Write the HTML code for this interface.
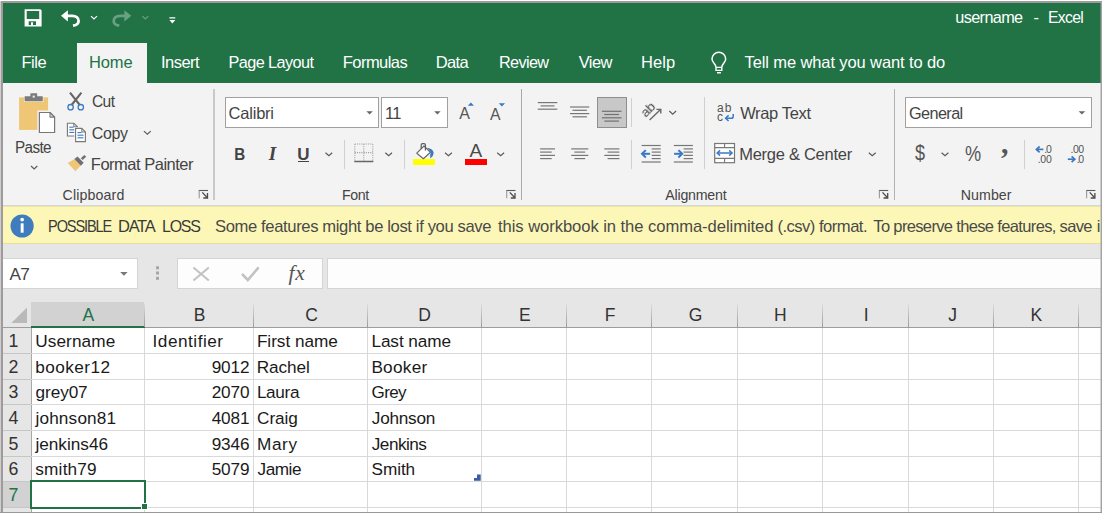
<!DOCTYPE html>
<html lang="en">
<head>
<meta charset="utf-8">
<title>username - Excel</title>
<style>
html,body{margin:0;padding:0}
body{width:1102px;height:513px;position:relative;overflow:hidden;background:#fff;
 font-family:"Liberation Sans",sans-serif;font-size:15.5px;color:#444}
#app{position:absolute;left:0;top:0;width:1102px;height:513px;overflow:hidden}
.t{position:absolute;white-space:nowrap;margin:0}
.blk,.edge,svg{position:absolute;display:block}
svg{overflow:visible}
.edge{z-index:5}
</style>
</head>
<body>
<div id="app">
<header id="titlebar">
<div class="blk" style="left:3px;top:3px;width:1098px;height:80px;background:#217346"></div>
<span class="t" style="left:955.3px;top:6.1px;font-size:16.25px;line-height:22px;color:#fff;letter-spacing:-0.63px">username</span>
<span class="t" style="left:1033.5px;top:6.1px;font-size:16.5px;line-height:22px;color:#fff">-</span>
<span class="t" style="left:1047.7px;top:7.1px;font-size:16px;line-height:21px;color:#fff;letter-spacing:-0.65px;transform:scaleX(0.981);transform-origin:1px 50%">Excel</span>
<svg aria-label="Save" style="left:23px;top:8px" width="20" height="20" viewBox="23 8 20 20"><path d="M24.6 9.2 H40.4 L41.6 10.4 V26.6 H24.6 Z" fill="#fff"/><rect x="26.7" y="11" width="12.5" height="8" fill="#217346"/><rect x="28.7" y="21.3" width="7.3" height="3.8" fill="#217346"/><rect x="31" y="22.3" width="2" height="3.4" fill="#fff"/></svg>
<svg aria-label="Undo" style="left:59px;top:8px" width="24" height="20" viewBox="59 8 24 20"><path d="M61 15.8 L67.9 10.2 V21.4 Z" fill="#fff"/><path d="M66 15.8 H72.2 C76.3 15.8 78.6 18.3 78.6 20.9 C78.6 23.4 76.6 25.1 73 25.7" fill="none" stroke="#fff" stroke-width="2.8"/></svg>
<svg style="left:90px;top:15px" width="9" height="6" viewBox="90 15 9 6"><path d="M91 16.1 L94 18.9 L97 16.1" fill="none" stroke="#fff" stroke-width="1.2"/></svg>
<svg aria-label="Redo" style="left:110px;top:8px" width="24" height="20" viewBox="110 8 24 20"><g opacity=".33"><path d="M131.3 15.8 L124.4 10.2 V21.4 Z" fill="#fff"/><path d="M126.3 15.8 H120.1 C116 15.8 113.7 18.3 113.7 20.9 C113.7 23.4 115.7 25.1 119.3 25.7" fill="none" stroke="#fff" stroke-width="2.8"/></g></svg>
<svg style="left:141px;top:15px" width="9" height="6" viewBox="141 15 9 6"><path d="M142.4 16.1 L145.35 18.9 L148.3 16.1" fill="none" stroke="#fff" stroke-width="1.2" opacity="0.33"/></svg>
<svg aria-label="Customize Quick Access Toolbar" style="left:168px;top:16px" width="9" height="9" viewBox="168 16 9 9"><path d="M169.4 17.2 H175.3 V18.5 H169.4 Z M169.4 20 H175.3 L172.35 23.6 Z" fill="#fff"/></svg>
</header>
<nav id="tabs">
<div class="blk" style="left:77px;top:43px;width:70px;height:40px;background:#f3f3f3"></div>
<span class="t" style="left:21.5px;top:51px;font-size:16.5px;line-height:22px;color:#fff;letter-spacing:-0.47px">File</span>
<span class="t" style="left:89px;top:51px;font-size:16.5px;line-height:22px;color:#217346;letter-spacing:-0.11px">Home</span>
<span class="t" style="left:161px;top:51px;font-size:16.5px;line-height:22px;color:#fff;letter-spacing:-0.54px">Insert</span>
<span class="t" style="left:228.5px;top:51px;font-size:16.25px;line-height:22px;color:#fff;letter-spacing:-0.57px">Page Layout</span>
<span class="t" style="left:342.75px;top:51px;font-size:16.5px;line-height:22px;color:#fff;letter-spacing:-0.54px">Formulas</span>
<span class="t" style="left:435.75px;top:51px;font-size:16.5px;line-height:22px;color:#fff;letter-spacing:-0.64px">Data</span>
<span class="t" style="left:499px;top:51px;font-size:16.25px;line-height:22px;color:#fff;letter-spacing:-0.65px">Review</span>
<span class="t" style="left:578.75px;top:51px;font-size:16.5px;line-height:22px;color:#fff;letter-spacing:-0.6px">View</span>
<span class="t" style="left:641px;top:51px;font-size:16.5px;line-height:22px;color:#fff;letter-spacing:0.08px">Help</span>
<span class="t" style="left:744.5px;top:51px;font-size:16.5px;line-height:22px;color:#fff;letter-spacing:-0.11px">Tell me what you want to do</span>
<svg aria-label="Tell me" style="left:709px;top:50px" width="20" height="25" viewBox="709 50 20 25"><path d="M716 67.2 C716 63.8 712 62.6 712 59.1 A6.85 6.85 0 0 1 725.7 59.1 C725.7 62.6 721.8 63.8 721.8 67.2" fill="none" stroke="#fff" stroke-width="1.5"/><path d="M716 67.4 H721.8 V70.4 H716 Z M717 72.8 H720.9" fill="none" stroke="#fff" stroke-width="1.4"/></svg>
</nav>
<section id="ribbon">
<div class="blk" style="left:3px;top:83px;width:1098px;height:122px;background:#f3f3f3"></div>
<div class="blk" style="left:3px;top:205px;width:1098px;height:1px;background:#d6d6d9"></div>
<div class="blk" style="left:213.3px;top:89px;width:1.5px;height:110.5px;background:#c9c9c9"></div>
<div class="blk" style="left:521px;top:89px;width:1px;height:110.5px;background:#aaaaaa"></div>
<div class="blk" style="left:894px;top:89px;width:1px;height:110.5px;background:#b2b2b2"></div>
<div class="blk" style="left:704px;top:96.5px;width:1px;height:72.5px;background:#cfcfcf"></div>
<div class="blk" style="left:344px;top:140px;width:1px;height:28.5px;background:#d0d0d0"></div>
<div class="blk" style="left:404px;top:140px;width:1px;height:28.5px;background:#d0d0d0"></div>
<div class="blk" style="left:631.3px;top:140px;width:1px;height:28.5px;background:#d0d0d0"></div>
<div class="blk" style="left:1024px;top:140px;width:1px;height:28.5px;background:#d0d0d0"></div>
<div class="blk" style="left:631.3px;top:98.3px;width:1px;height:28.5px;background:#d0d0d0"></div>
<div class="blk" style="left:225px;top:97px;width:154px;height:31px;background:#fff;border:1px solid #a0a0a0;box-sizing:border-box"></div>
<div class="blk" style="left:381px;top:97px;width:66.5px;height:31px;background:#fff;border:1px solid #a0a0a0;box-sizing:border-box"></div>
<div class="blk" style="left:905px;top:97px;width:186.5px;height:31px;background:#fff;border:1px solid #a0a0a0;box-sizing:border-box"></div>
<div class="blk" style="left:597px;top:97px;width:30px;height:31px;background:#c8c8c8;border:1px solid #8e8e8e;box-sizing:border-box"></div>
<div class="blk" style="left:298.2px;top:161px;width:10.9px;height:1.3px;background:#444"></div>
<div class="blk" style="left:413px;top:159.2px;width:21.9px;height:5.4px;background:#ffff00"></div>
<div class="blk" style="left:465.3px;top:159.2px;width:21.8px;height:5.4px;background:#ff0000"></div>
<span class="t" style="left:15.3px;top:136.7px;font-size:16px;line-height:21px;color:#444444;letter-spacing:-0.65px;transform:scaleX(0.954);transform-origin:1px 50%">Paste</span>
<span class="t" style="left:91.8px;top:91.4px;font-size:16px;line-height:21px;color:#444444;letter-spacing:-0.65px;transform:scaleX(0.973);transform-origin:-0px 50%">Cut</span>
<span class="t" style="left:91.8px;top:122.8px;font-size:16px;line-height:21px;color:#444444;letter-spacing:-0.38px">Copy</span>
<span class="t" style="left:90.8px;top:152.5px;font-size:16.5px;line-height:22px;color:#444444;letter-spacing:-0.49px">Format Painter</span>
<span class="t" style="left:62.6px;top:184.5px;font-size:14.2px;line-height:20px;color:#444444;letter-spacing:0.12px">Clipboard</span>
<span class="t" style="left:228.6px;top:101.5px;font-size:16.5px;line-height:22px;color:#444444;letter-spacing:-0.22px">Calibri</span>
<span class="t" style="left:384.6px;top:101.5px;font-size:16.5px;line-height:22px;color:#444444;letter-spacing:-0.65px;transform:scaleX(0.993);transform-origin:1px 50%">11</span>
<span class="t" style="left:233.6px;top:142.9px;font-size:17.4px;line-height:23px;color:#444444;font-weight:bold;transform:scaleX(0.873);transform-origin:1px 50%">B</span>
<span class="t" style="left:268.8px;top:140.9px;font-size:19px;line-height:25px;color:#444444;font-weight:bold;font-style:italic;font-family:'Liberation Serif',serif">I</span>
<span class="t" style="left:297.3px;top:142.5px;font-size:17px;line-height:23px;color:#444444;font-weight:bold">U</span>
<span class="t" style="left:342.1px;top:184.5px;font-size:14.2px;line-height:20px;color:#444444;letter-spacing:-0.42px">Font</span>
<span class="t" style="left:459.2px;top:102.5px;font-size:16px;line-height:21px;color:#555">A</span>
<span class="t" style="left:490px;top:103.8px;font-size:15.8px;line-height:21px;color:#555">A</span>
<span class="t" style="left:469.4px;top:138.3px;font-size:19px;line-height:25px;color:#4a4a4a">A</span>
<span class="t" style="left:740.2px;top:101.5px;font-size:16.5px;line-height:22px;color:#444444;letter-spacing:-0.36px">Wrap Text</span>
<span class="t" style="left:739.2px;top:142.8px;font-size:16.5px;line-height:22px;color:#444444;letter-spacing:-0.27px">Merge &amp; Center</span>
<span class="t" style="left:665.3px;top:184.5px;font-size:14.2px;line-height:20px;color:#444444;letter-spacing:-0.22px">Alignment</span>
<span class="t" style="left:909.1px;top:101.5px;font-size:16.25px;line-height:22px;color:#444444;letter-spacing:-0.62px">General</span>
<span class="t" style="left:914.9px;top:138.3px;font-size:22.5px;line-height:30px;color:#555;transform:scaleX(0.800);transform-origin:-0px 50%">$</span>
<span class="t" style="left:964.6px;top:139.8px;font-size:21.2px;line-height:28px;color:#555;transform:scaleX(0.858);transform-origin:-0px 50%">%</span>
<span class="t" style="left:1001.1px;top:122.6px;font-size:30px;line-height:39px;color:#555;font-weight:bold;font-family:'Liberation Serif',serif">,</span>
<span class="t" style="left:960.8px;top:184.5px;font-size:14.2px;line-height:20px;color:#444444;letter-spacing:0.05px">Number</span>
<span class="t" style="left:717px;top:98.3px;font-size:12px;line-height:20px;color:#555;letter-spacing:1.13px">ab</span>
<span class="t" style="left:717px;top:106.7px;font-size:12px;line-height:20px;color:#555">c</span>
<span class="t" style="left:1044.3px;top:138.8px;font-size:10.5px;line-height:20px;color:#555;letter-spacing:-1.32px">.0</span>
<span class="t" style="left:1037.7px;top:148.5px;font-size:10.5px;line-height:20px;color:#555;letter-spacing:-0.28px">.00</span>
<span class="t" style="left:1070.5px;top:138.8px;font-size:10.5px;line-height:20px;color:#555;letter-spacing:-0.48px">.00</span>
<span class="t" style="left:1076.7px;top:148.5px;font-size:10.5px;line-height:20px;color:#555;letter-spacing:-1.32px">.0</span>
<svg aria-label="Paste" style="left:18px;top:92px" width="39" height="43" viewBox="18 92 39 43"><rect x="19.1" y="97.4" width="29" height="32.5" fill="#efc676"/><rect x="24" y="95.6" width="19.4" height="6.2" fill="#f3f3f3"/><rect x="24.6" y="96.2" width="18.2" height="5" rx=".6" fill="#7b7b7b"/><rect x="30.4" y="93.2" width="6.8" height="4" rx=".6" fill="#7b7b7b"/><rect x="32.7" y="95.6" width="2" height="2" fill="#f4f4f4"/><path d="M37.4 110.5 H50.8 L56.6 116.3 V134.5 H37.4 Z" fill="#f3f3f3"/><path d="M39.4 112.5 H50 L54.6 117.1 V132.5 H39.4 Z" fill="#fff" stroke="#777" stroke-width="1.2"/><path d="M50 112.5 V117.1 H54.6 Z" fill="#ddd" stroke="#777" stroke-width="1.1" stroke-linejoin="round"/></svg>
<svg style="left:30px;top:165px" width="10" height="6" viewBox="30 165 10 6"><path d="M31 166 L34.15 168.9 L37.3 166" fill="none" stroke="#5a5a5a" stroke-width="1.2"/></svg>
<svg aria-label="Cut" style="left:66px;top:91px" width="20" height="21" viewBox="66 91 20 21"><path d="M70 92.6 L79.8 105 M81.4 92.6 L71.6 105" stroke="#666" stroke-width="2.1" fill="none"/><circle cx="70.6" cy="107.2" r="2.7" fill="none" stroke="#3b79c3" stroke-width="1.3"/><circle cx="80.8" cy="107.2" r="2.7" fill="none" stroke="#3b79c3" stroke-width="1.3"/></svg>
<svg aria-label="Copy" style="left:66px;top:122px" width="21" height="21" viewBox="66 122 21 21"><path d="M67.4 123.2 H73.8 L77.4 126.8 V136 H67.4 Z" fill="#fff" stroke="#777" stroke-width="1.1"/><path d="M73.8 123.2 V126.8 H77.4" fill="none" stroke="#777" stroke-width="1"/><path d="M69.3 127.2 H73.6" stroke="#3b79c3" stroke-width="1.1"/><path d="M69.3 129.8 H75.4" stroke="#3b79c3" stroke-width="1.1"/><path d="M69.3 132.4 H75.4" stroke="#3b79c3" stroke-width="1.1"/><rect x="74.2" y="127.2" width="12.4" height="15.8" fill="#f3f3f3"/><path d="M75.6 128.4 H81.8 L85.4 132 V141.6 H75.6 Z" fill="#fff" stroke="#777" stroke-width="1.1"/><path d="M81.8 128.4 V132 H85.4" fill="none" stroke="#777" stroke-width="1"/><path d="M77.5 132.6 H81.6" stroke="#3b79c3" stroke-width="1.1"/><path d="M77.5 135.2 H83.5" stroke="#3b79c3" stroke-width="1.1"/><path d="M77.5 137.8 H83.5" stroke="#3b79c3" stroke-width="1.1"/></svg>
<svg style="left:142px;top:130px" width="10" height="6" viewBox="142 130 10 6"><path d="M143.9 131.1 L147.35 134.1 L150.8 131.1" fill="none" stroke="#5a5a5a" stroke-width="1.2"/></svg>
<svg aria-label="Format Painter" style="left:66px;top:154px" width="22" height="19" viewBox="66 154 22 19"><path d="M67.7 162.9 L74.6 159 L80.9 165.5 L75.4 171.3 Z" fill="#efc676"/><path d="M74.4 159 L77.5 156.4 L83.7 162.7 L80.9 165.7 Z" fill="#707070"/><path d="M80.8 158.2 L84.3 154.9 L86.2 156.8 L82.7 160.1 Z" fill="#707070"/></svg>
<svg style="left:197px;top:189px" width="13" height="12" viewBox="197 189 13 12"><path d="M198.7 190.5 H208" stroke="#5a5a5a" stroke-width="1.1"/><path d="M199.2 190.5 V198.2" stroke="#999" stroke-width="1.1"/><path d="M202.3 192.4 L207.1 197.5" stroke="#4a4a4a" stroke-width="1.3"/><path d="M207.5 193 V198 H203.3" fill="none" stroke="#4a4a4a" stroke-width="1.3"/></svg>
<svg style="left:365px;top:110px" width="10" height="7" viewBox="365 110 10 7"><path d="M366.4 111.2 H372.8 L369.6 114.4 Z" fill="#666"/></svg>
<svg style="left:433px;top:110px" width="10" height="7" viewBox="433 110 10 7"><path d="M434.2 111.2 H440.6 L437.4 114.4 Z" fill="#666"/></svg>
<svg style="left:466px;top:101px" width="9" height="6" viewBox="466 101 9 6"><path d="M467.8 105.7 H474 L470.9 102.4 Z" fill="#3b79c3"/></svg>
<svg style="left:497px;top:102px" width="9" height="6" viewBox="497 102 9 6"><path d="M498.8 103.2 H505 L501.9 106.6 Z" fill="#3b79c3"/></svg>
<svg style="left:324px;top:151px" width="10" height="6" viewBox="324 151 10 6"><path d="M325.5 152.7 L328.85 155.7 L332.2 152.7" fill="none" stroke="#5a5a5a" stroke-width="1.2"/></svg>
<svg aria-label="Borders" style="left:353px;top:142px" width="22" height="22" viewBox="353 142 22 22"><path d="M354.8 144 H372.8 M354.8 152.6 H372.8 M354.8 144 V161 M363.8 144 V161 M372.8 144 V161" stroke="#a0a0a0" stroke-width="1.1" stroke-dasharray="1.1 1.1" fill="none"/><path d="M354.3 161.5 H373.3" stroke="#666" stroke-width="1.5"/></svg>
<svg style="left:384px;top:151px" width="10" height="6" viewBox="384 151 10 6"><path d="M385.3 152.7 L388.65 155.7 L392 152.7" fill="none" stroke="#5a5a5a" stroke-width="1.2"/></svg>
<svg aria-label="Fill Color" style="left:414px;top:141px" width="23" height="19" viewBox="414 141 23 19"><path d="M424 146 L430.5 152.2 L423.4 158.7 L416.8 153.2 Z" fill="#fff" stroke="#6a6a6a" stroke-width="1.2" stroke-linejoin="round"/><path d="M421.2 149 V145 Q421.2 143.6 422.6 143.6 H424 Q425.4 143.6 425.4 145 V150.6" fill="none" stroke="#5c5c5c" stroke-width="1.2"/><path d="M427.4 147.8 Q433 148.8 433.7 153 Q433.5 156.4 430.3 158.4 Q429.4 155 430.9 152.4 Z" fill="#3b79c3"/></svg>
<svg style="left:444px;top:151px" width="10" height="6" viewBox="444 151 10 6"><path d="M445 152.7 L448.45 155.7 L451.9 152.7" fill="none" stroke="#5a5a5a" stroke-width="1.2"/></svg>
<svg style="left:496px;top:151px" width="10" height="6" viewBox="496 151 10 6"><path d="M497.2 152.7 L500.65 155.7 L504.1 152.7" fill="none" stroke="#5a5a5a" stroke-width="1.2"/></svg>
<svg style="left:505px;top:189px" width="13" height="12" viewBox="505 189 13 12"><path d="M506.2 190.5 H515.5" stroke="#5a5a5a" stroke-width="1.1"/><path d="M506.7 190.5 V198.2" stroke="#999" stroke-width="1.1"/><path d="M509.8 192.4 L514.6 197.5" stroke="#4a4a4a" stroke-width="1.3"/><path d="M515 193 V198 H510.8" fill="none" stroke="#4a4a4a" stroke-width="1.3"/></svg>
<svg aria-label="Top Align" style="left:536px;top:100px" width="23" height="12" viewBox="536 100 23 12"><path d="M537.8 102.6 H557.3" stroke="#777" stroke-width="1.2"/><path d="M540.6 105.9 H554.5" stroke="#777" stroke-width="1.2"/><path d="M537.8 109.2 H557.3" stroke="#777" stroke-width="1.2"/></svg>
<svg aria-label="Middle Align" style="left:569px;top:105px" width="22" height="14" viewBox="569 105 22 14"><path d="M570 107 H589.3" stroke="#777" stroke-width="1.2"/><path d="M572.5 110.3 H586.9" stroke="#777" stroke-width="1.2"/><path d="M570 113.6 H589.3" stroke="#777" stroke-width="1.2"/><path d="M572.5 116.8 H586.9" stroke="#777" stroke-width="1.2"/></svg>
<svg aria-label="Bottom Align" style="left:600px;top:109px" width="23" height="14" viewBox="600 109 23 14"><path d="M601.9 111.3 H621.5" stroke="#707070" stroke-width="1.2"/><path d="M604.3 114.5 H619" stroke="#707070" stroke-width="1.2"/><path d="M601.9 117.8 H621.5" stroke="#707070" stroke-width="1.2"/><path d="M604.3 121.1 H619" stroke="#707070" stroke-width="1.2"/></svg>
<svg aria-label="Align Left" style="left:539px;top:147px" width="18" height="14" viewBox="539 147 18 14"><path d="M540.1 148.9 H555" stroke="#777" stroke-width="1.2"/><path d="M540.1 152.1 H551.7" stroke="#777" stroke-width="1.2"/><path d="M540.1 155.4 H555" stroke="#777" stroke-width="1.2"/><path d="M540.1 158.6 H551.7" stroke="#777" stroke-width="1.2"/></svg>
<svg aria-label="Center" style="left:570px;top:147px" width="20" height="14" viewBox="570 147 20 14"><path d="M571.2 148.9 H588.3" stroke="#777" stroke-width="1.2"/><path d="M574.4 152.1 H585.2" stroke="#777" stroke-width="1.2"/><path d="M571.2 155.4 H588.3" stroke="#777" stroke-width="1.2"/><path d="M574.4 158.6 H585.2" stroke="#777" stroke-width="1.2"/></svg>
<svg aria-label="Align Right" style="left:603px;top:147px" width="18" height="14" viewBox="603 147 18 14"><path d="M604.3 148.9 H619.4" stroke="#777" stroke-width="1.2"/><path d="M607.6 152.1 H619.4" stroke="#777" stroke-width="1.2"/><path d="M604.3 155.4 H619.4" stroke="#777" stroke-width="1.2"/><path d="M607.6 158.6 H619.4" stroke="#777" stroke-width="1.2"/></svg>
<span class="t" style="left:647.8px;top:109.5px;font-size:13.6px;line-height:16px;color:#4c4c4c;transform:translate(-50%,-50%) rotate(-45deg);will-change:transform;letter-spacing:-.4px">ab</span>
<svg aria-label="Orientation" style="left:640px;top:101px" width="23" height="21" viewBox="640 101 23 21"><path d="M649.6 120 L660.3 109.7" stroke="#666" stroke-width="1.4"/><path d="M656.4 109.4 H660.8 V113.6" fill="none" stroke="#666" stroke-width="1.4"/></svg>
<svg style="left:668px;top:110px" width="10" height="7" viewBox="668 110 10 7"><path d="M669.3 111 L672.7 114.1 L676.1 111" fill="none" stroke="#5a5a5a" stroke-width="1.2"/></svg>
<svg style="left:640px;top:144px" width="22" height="20" viewBox="640 144 22 20"><path d="M641.6 145.5 H660.7" stroke="#777" stroke-width="1.2"/><path d="M641.6 162 H660.7" stroke="#777" stroke-width="1.2"/><path d="M651.7 148.9 H660.7" stroke="#777" stroke-width="1.2"/><path d="M651.7 152.1 H660.7" stroke="#777" stroke-width="1.2"/><path d="M651.7 155.4 H660.7" stroke="#777" stroke-width="1.2"/><path d="M651.7 158.6 H660.7" stroke="#777" stroke-width="1.2"/><path d="M643 153.8 H650.1" stroke="#3b79c3" stroke-width="2"/><path d="M645.8 150.1 L642 153.8 L645.8 157.5" fill="none" stroke="#3b79c3" stroke-width="2"/></svg>
<svg style="left:672px;top:144px" width="22" height="20" viewBox="672 144 22 20"><path d="M673.8 145.5 H692.9" stroke="#777" stroke-width="1.2"/><path d="M673.8 162 H692.9" stroke="#777" stroke-width="1.2"/><path d="M683.6 148.9 H692.9" stroke="#777" stroke-width="1.2"/><path d="M683.6 152.1 H692.9" stroke="#777" stroke-width="1.2"/><path d="M683.6 155.4 H692.9" stroke="#777" stroke-width="1.2"/><path d="M683.6 158.6 H692.9" stroke="#777" stroke-width="1.2"/><path d="M674.1 153.8 H681.2" stroke="#3b79c3" stroke-width="2"/><path d="M678.4 150.1 L682.2 153.8 L678.4 157.5" fill="none" stroke="#3b79c3" stroke-width="2"/></svg>
<svg aria-label="Wrap Text" style="left:723px;top:112px" width="13" height="11" viewBox="723 112 13 11"><path d="M733.2 114 V116.4 Q733.2 118.2 731.4 118.2 H726" fill="none" stroke="#3b79c3" stroke-width="1.5"/><path d="M728.6 115.4 L725.6 118.2 L728.6 121" fill="none" stroke="#3b79c3" stroke-width="1.5"/></svg>
<svg aria-label="Merge and Center" style="left:713px;top:142px" width="23" height="22" viewBox="713 142 23 22"><rect x="714.7" y="143.5" width="19.8" height="19.2" fill="#fff" stroke="#777" stroke-width="1.2"/><path d="M714.7 147.6 H734.5 M714.7 158.4 H734.5 M724.6 143.5 V147.6 M724.6 158.4 V162.7" stroke="#777" stroke-width="1.1" fill="none"/><path d="M717.6 153 H731.6" stroke="#3b79c3" stroke-width="1.5"/><path d="M720 150.4 L717.2 153 L720 155.6 M729.2 150.4 L732 153 L729.2 155.6" fill="none" stroke="#3b79c3" stroke-width="1.5"/></svg>
<svg style="left:867px;top:151px" width="10" height="6" viewBox="867 151 10 6"><path d="M868.8 152.7 L872.25 155.7 L875.7 152.7" fill="none" stroke="#5a5a5a" stroke-width="1.2"/></svg>
<svg style="left:877px;top:189px" width="13" height="12" viewBox="877 189 13 12"><path d="M878.9 190.5 H888.2" stroke="#5a5a5a" stroke-width="1.1"/><path d="M879.4 190.5 V198.2" stroke="#999" stroke-width="1.1"/><path d="M882.5 192.4 L887.3 197.5" stroke="#4a4a4a" stroke-width="1.3"/><path d="M887.7 193 V198 H883.5" fill="none" stroke="#4a4a4a" stroke-width="1.3"/></svg>
<svg style="left:1077px;top:110px" width="10" height="7" viewBox="1077 110 10 7"><path d="M1078.6 111.2 H1085.2 L1081.9 114.4 Z" fill="#666"/></svg>
<svg style="left:940px;top:151px" width="10" height="6" viewBox="940 151 10 6"><path d="M941.6 152.7 L945 155.7 L948.4 152.7" fill="none" stroke="#5a5a5a" stroke-width="1.2"/></svg>
<svg aria-label="Increase Decimal" style="left:1035px;top:145px" width="10" height="9" viewBox="1035 145 10 9"><path d="M1036.8 149.4 H1043.4" stroke="#3b79c3" stroke-width="1.7"/><path d="M1039.6 146.5 L1036.4 149.4 L1039.6 152.3" fill="none" stroke="#3b79c3" stroke-width="1.7"/></svg>
<svg aria-label="Decrease Decimal" style="left:1066px;top:154px" width="11" height="9" viewBox="1066 154 11 9"><path d="M1067.8 159.2 H1074.4" stroke="#3b79c3" stroke-width="1.7"/><path d="M1071.6 156.29999999999998 L1074.8 159.2 L1071.6 162.1" fill="none" stroke="#3b79c3" stroke-width="1.7"/></svg>
<svg style="left:1085px;top:189px" width="13" height="12" viewBox="1085 189 13 12"><path d="M1086.1 190.5 H1095.4" stroke="#5a5a5a" stroke-width="1.1"/><path d="M1086.6 190.5 V198.2" stroke="#999" stroke-width="1.1"/><path d="M1089.7 192.4 L1094.5 197.5" stroke="#4a4a4a" stroke-width="1.3"/><path d="M1094.9 193 V198 H1090.7" fill="none" stroke="#4a4a4a" stroke-width="1.3"/></svg>
</section>
<section id="msgbar">
<div class="blk" style="left:3px;top:206px;width:1098px;height:38.4px;background:#fcf7b6;border-top:1px solid #ece7a6;border-bottom:1.4px solid #e6e09d;box-sizing:border-box"></div>
<span class="t" style="left:48.4px;top:215.8px;font-size:16.6px;line-height:22px;color:#3a3a3a;letter-spacing:-1.3px;transform:scaleX(0.877);transform-origin:1px 50%">POSSIBLE</span>
<span class="t" style="left:117.9px;top:215.8px;font-size:16.6px;line-height:22px;color:#3a3a3a;letter-spacing:-1.3px;transform:scaleX(0.994);transform-origin:1px 50%">DATA</span>
<span class="t" style="left:162.3px;top:215.8px;font-size:16.6px;line-height:22px;color:#3a3a3a;letter-spacing:-1.3px;transform:scaleX(0.962);transform-origin:1px 50%">LOSS</span>
<span class="t" style="left:215px;top:215.8px;font-size:16.6px;line-height:22px;color:#4a4a4a;letter-spacing:-0.37px">Some features might be lost if you save</span>
<span class="t" style="left:498px;top:215.8px;font-size:16.6px;line-height:22px;color:#4a4a4a;letter-spacing:-0.06px">this workbook in the comma-delimited</span>
<span class="t" style="left:777.4px;top:215.8px;font-size:16.6px;line-height:22px;color:#4a4a4a;letter-spacing:-0.51px">(.csv) format.</span>
<span class="t" style="left:873.3px;top:214.8px;font-size:16.5px;line-height:22px;color:#4a4a4a;letter-spacing:-0.65px">To preserve these features, save</span>
<span class="t" style="left:1096.8px;top:215.8px;font-size:16.6px;line-height:22px;color:#4a4a4a">i</span>
<svg aria-label="Information" style="left:9px;top:213px" width="26" height="26" viewBox="9 213 26 26"><circle cx="22.1" cy="226" r="11.6" fill="#3f7cbe"/><rect x="20.7" y="223.3" width="2.9" height="9.4" fill="#fff"/><circle cx="22.15" cy="219.6" r="1.85" fill="#fff"/></svg>
</section>
<section id="formulabar">
<div class="blk" style="left:3px;top:244.4px;width:1098px;height:58px;background:#e6e6e6"></div>
<div class="blk" style="left:3px;top:258px;width:134.5px;height:31px;background:#fff;border:1px solid #d4d4d4;border-left:0;box-sizing:border-box"></div>
<div class="blk" style="left:177.3px;top:258px;width:145.7px;height:31px;background:#fdfdfd;border:1px solid #d4d4d4;box-sizing:border-box"></div>
<div class="blk" style="left:327px;top:258px;width:775px;height:31px;background:#fdfdfd;border:1px solid #d4d4d4;box-sizing:border-box"></div>
<span class="t" style="left:9.4px;top:262.9px;font-size:17.2px;line-height:23px;color:#444;letter-spacing:-0.56px">A7</span>
<span class="t" style="left:288.4px;top:259px;font-size:21.5px;line-height:28px;color:#555;letter-spacing:0.83px;font-style:italic;font-family:'Liberation Serif',serif">fx</span>
<svg style="left:119px;top:271px" width="11" height="7" viewBox="119 271 11 7"><path d="M120.2 272 H127.6 L123.9 275.7 Z" fill="#777"/></svg>
<svg aria-label="Resize" style="left:154px;top:265px" width="7" height="17" viewBox="154 265 7 17"><rect x="156" y="266.3" width="3" height="3" fill="#a6a6a6"/><rect x="156" y="271.5" width="3" height="3" fill="#a6a6a6"/><rect x="156" y="276.8" width="3" height="3" fill="#a6a6a6"/></svg>
<svg aria-label="Cancel" style="left:191px;top:265px" width="20" height="18" viewBox="191 265 20 18"><path d="M193.4 267.4 L208.8 280.6 M208.8 267.4 L193.4 280.6" stroke="#c2c2c2" stroke-width="2" fill="none"/></svg>
<svg aria-label="Enter" style="left:239px;top:265px" width="22" height="18" viewBox="239 265 22 18"><path d="M242 273.8 L247.8 280 L258.6 267.4" stroke="#c2c2c2" stroke-width="2.6" fill="none"/></svg>
</section>
<section id="grid">
<div class="blk" style="left:3px;top:302px;width:1098px;height:26px;background:#e6e6e6"></div>
<div class="blk" style="left:3px;top:328px;width:1098px;height:184px;background:#fff"></div>
<div class="blk" style="left:3px;top:328px;width:28px;height:184px;background:#e6e6e6"></div>
<div class="blk" style="left:31.3px;top:302.4px;width:113.2px;height:25px;background:#d2d2d2"></div>
<div class="blk" style="left:3px;top:482.22px;width:27.5px;height:25.6px;background:#d2d2d2"></div>
<div class="blk" style="left:3px;top:327px;width:1098px;height:1px;background:#9d9d9d"></div>
<div class="blk" style="left:31px;top:326px;width:114px;height:2px;background:#217346"></div>
<div class="blk" style="left:30.5px;top:328px;width:1px;height:184px;background:#a8a8a8"></div>
<div class="blk" style="left:144px;top:303px;width:1px;height:24px;background:linear-gradient(#e0e0e0,#9a9a9a)"></div>
<div class="blk" style="left:253px;top:303px;width:1px;height:24px;background:linear-gradient(#e0e0e0,#9a9a9a)"></div>
<div class="blk" style="left:367px;top:303px;width:1px;height:24px;background:linear-gradient(#e0e0e0,#9a9a9a)"></div>
<div class="blk" style="left:480.5px;top:303px;width:1px;height:24px;background:linear-gradient(#e0e0e0,#9a9a9a)"></div>
<div class="blk" style="left:565.9px;top:303px;width:1px;height:24px;background:linear-gradient(#e0e0e0,#9a9a9a)"></div>
<div class="blk" style="left:651.3px;top:303px;width:1px;height:24px;background:linear-gradient(#e0e0e0,#9a9a9a)"></div>
<div class="blk" style="left:736.7px;top:303px;width:1px;height:24px;background:linear-gradient(#e0e0e0,#9a9a9a)"></div>
<div class="blk" style="left:822.1px;top:303px;width:1px;height:24px;background:linear-gradient(#e0e0e0,#9a9a9a)"></div>
<div class="blk" style="left:907.5px;top:303px;width:1px;height:24px;background:linear-gradient(#e0e0e0,#9a9a9a)"></div>
<div class="blk" style="left:992.9px;top:303px;width:1px;height:24px;background:linear-gradient(#e0e0e0,#9a9a9a)"></div>
<div class="blk" style="left:1078.3px;top:303px;width:1px;height:24px;background:linear-gradient(#e0e0e0,#9a9a9a)"></div>
<div class="blk" style="left:144px;top:328px;width:1px;height:184px;background:#d9d9d9"></div>
<div class="blk" style="left:253px;top:328px;width:1px;height:184px;background:#d9d9d9"></div>
<div class="blk" style="left:367px;top:328px;width:1px;height:184px;background:#d9d9d9"></div>
<div class="blk" style="left:480.5px;top:328px;width:1px;height:184px;background:#d9d9d9"></div>
<div class="blk" style="left:565.9px;top:328px;width:1px;height:184px;background:#d9d9d9"></div>
<div class="blk" style="left:651.3px;top:328px;width:1px;height:184px;background:#d9d9d9"></div>
<div class="blk" style="left:736.7px;top:328px;width:1px;height:184px;background:#d9d9d9"></div>
<div class="blk" style="left:822.1px;top:328px;width:1px;height:184px;background:#d9d9d9"></div>
<div class="blk" style="left:907.5px;top:328px;width:1px;height:184px;background:#d9d9d9"></div>
<div class="blk" style="left:992.9px;top:328px;width:1px;height:184px;background:#d9d9d9"></div>
<div class="blk" style="left:1078.3px;top:328px;width:1px;height:184px;background:#d9d9d9"></div>
<div class="blk" style="left:31px;top:353.02px;width:1070px;height:1px;background:#d9d9d9"></div>
<div class="blk" style="left:3px;top:353.02px;width:28px;height:1px;background:#c6c6c6"></div>
<div class="blk" style="left:31px;top:378.64px;width:1070px;height:1px;background:#d9d9d9"></div>
<div class="blk" style="left:3px;top:378.64px;width:28px;height:1px;background:#c6c6c6"></div>
<div class="blk" style="left:31px;top:404.26px;width:1070px;height:1px;background:#d9d9d9"></div>
<div class="blk" style="left:3px;top:404.26px;width:28px;height:1px;background:#c6c6c6"></div>
<div class="blk" style="left:31px;top:429.88px;width:1070px;height:1px;background:#d9d9d9"></div>
<div class="blk" style="left:3px;top:429.88px;width:28px;height:1px;background:#c6c6c6"></div>
<div class="blk" style="left:31px;top:455.5px;width:1070px;height:1px;background:#d9d9d9"></div>
<div class="blk" style="left:3px;top:455.5px;width:28px;height:1px;background:#c6c6c6"></div>
<div class="blk" style="left:31px;top:481.12px;width:1070px;height:1px;background:#d9d9d9"></div>
<div class="blk" style="left:3px;top:481.12px;width:28px;height:1px;background:#c6c6c6"></div>
<div class="blk" style="left:31px;top:506.74px;width:1070px;height:1px;background:#d9d9d9"></div>
<div class="blk" style="left:3px;top:506.74px;width:28px;height:1px;background:#c6c6c6"></div>
<div class="blk" style="left:31px;top:532.36px;width:1070px;height:1px;background:#d9d9d9"></div>
<div class="blk" style="left:3px;top:532.36px;width:28px;height:1px;background:#c6c6c6"></div>
<span class="t" style="left:82.6px;top:304.2px;font-size:17.5px;line-height:23px;color:#217346">A</span>
<span class="t" style="left:193.85px;top:304.2px;font-size:17.5px;line-height:23px;color:#333">B</span>
<span class="t" style="left:305.35px;top:304.2px;font-size:17.5px;line-height:23px;color:#333">C</span>
<span class="t" style="left:418.35px;top:304.2px;font-size:17.5px;line-height:23px;color:#333">D</span>
<span class="t" style="left:518.9px;top:304.2px;font-size:17.5px;line-height:23px;color:#333">E</span>
<span class="t" style="left:604.8px;top:304.2px;font-size:17.5px;line-height:23px;color:#333">F</span>
<span class="t" style="left:688.8px;top:304.2px;font-size:17.5px;line-height:23px;color:#333">G</span>
<span class="t" style="left:773.95px;top:304.2px;font-size:17.5px;line-height:23px;color:#333">H</span>
<span class="t" style="left:863.7px;top:304.2px;font-size:17.5px;line-height:23px;color:#333">I</span>
<span class="t" style="left:948.2px;top:304.2px;font-size:17.5px;line-height:23px;color:#333">J</span>
<span class="t" style="left:1030.6px;top:304.2px;font-size:17.5px;line-height:23px;color:#333">K</span>
<span class="t" style="left:8.6px;top:329.25px;font-size:17.8px;line-height:24px;color:#333">1</span>
<span class="t" style="left:8.5px;top:354.87px;font-size:17.8px;line-height:24px;color:#333">2</span>
<span class="t" style="left:8.5px;top:380.49px;font-size:17.8px;line-height:24px;color:#333">3</span>
<span class="t" style="left:8.5px;top:406.11px;font-size:17.8px;line-height:24px;color:#333">4</span>
<span class="t" style="left:8.5px;top:431.73px;font-size:17.8px;line-height:24px;color:#333">5</span>
<span class="t" style="left:8.5px;top:457.35px;font-size:17.8px;line-height:24px;color:#333">6</span>
<span class="t" style="left:8.5px;top:482.97px;font-size:17.8px;line-height:24px;color:#217346">7</span>
<span class="t" style="left:35.2px;top:330.25px;font-size:17.2px;line-height:23px;color:#1a1a1a;letter-spacing:0.11px">Username</span>
<span class="t" style="left:35.2px;top:355.87px;font-size:17.2px;line-height:23px;color:#1a1a1a;letter-spacing:0.47px">booker12</span>
<span class="t" style="left:35.6px;top:381.49px;font-size:17.2px;line-height:23px;color:#1a1a1a;letter-spacing:-0.1px">grey07</span>
<span class="t" style="left:35.4px;top:407.11px;font-size:17.2px;line-height:23px;color:#1a1a1a;letter-spacing:0.18px">johnson81</span>
<span class="t" style="left:35.4px;top:432.73px;font-size:17.2px;line-height:23px;color:#1a1a1a;letter-spacing:0.01px">jenkins46</span>
<span class="t" style="left:35.3px;top:458.35px;font-size:17.2px;line-height:23px;color:#1a1a1a;letter-spacing:0.2px">smith79</span>
<span class="t" style="left:152.6px;top:330.25px;font-size:17.2px;line-height:23px;color:#1a1a1a;letter-spacing:0.5px">Identifier</span>
<span class="t" style="left:211.7px;top:355.87px;font-size:17.2px;line-height:23px;color:#1a1a1a;letter-spacing:-0.16px">9012</span>
<span class="t" style="left:211.7px;top:381.49px;font-size:17.2px;line-height:23px;color:#1a1a1a;letter-spacing:-0.16px">2070</span>
<span class="t" style="left:211.7px;top:407.11px;font-size:17.2px;line-height:23px;color:#1a1a1a;letter-spacing:-0.16px">4081</span>
<span class="t" style="left:211.7px;top:432.73px;font-size:17.2px;line-height:23px;color:#1a1a1a;letter-spacing:-0.16px">9346</span>
<span class="t" style="left:211.7px;top:458.35px;font-size:17.2px;line-height:23px;color:#1a1a1a;letter-spacing:-0.16px">5079</span>
<span class="t" style="left:256.9px;top:330.25px;font-size:17.2px;line-height:23px;color:#1a1a1a;letter-spacing:-0.02px">First name</span>
<span class="t" style="left:256.7px;top:355.87px;font-size:17.2px;line-height:23px;color:#1a1a1a;letter-spacing:-0.08px">Rachel</span>
<span class="t" style="left:256.9px;top:381.49px;font-size:17.2px;line-height:23px;color:#1a1a1a;letter-spacing:-0.33px">Laura</span>
<span class="t" style="left:257.1px;top:407.11px;font-size:17.2px;line-height:23px;color:#1a1a1a;letter-spacing:-0.08px">Craig</span>
<span class="t" style="left:256.9px;top:432.73px;font-size:17.2px;line-height:23px;color:#1a1a1a;letter-spacing:0.67px">Mary</span>
<span class="t" style="left:257.5px;top:458.35px;font-size:17.2px;line-height:23px;color:#1a1a1a;letter-spacing:-0.45px">Jamie</span>
<span class="t" style="left:371.4px;top:330.25px;font-size:17.2px;line-height:23px;color:#1a1a1a;letter-spacing:-0.07px">Last name</span>
<span class="t" style="left:371.4px;top:355.87px;font-size:17.2px;line-height:23px;color:#1a1a1a;letter-spacing:0.27px">Booker</span>
<span class="t" style="left:371.6px;top:381.49px;font-size:17px;line-height:23px;color:#1a1a1a;letter-spacing:-0.65px">Grey</span>
<span class="t" style="left:371.8px;top:407.11px;font-size:17.2px;line-height:23px;color:#1a1a1a;letter-spacing:-0.24px">Johnson</span>
<span class="t" style="left:371.8px;top:432.73px;font-size:17.2px;line-height:23px;color:#1a1a1a;letter-spacing:-0.53px">Jenkins</span>
<span class="t" style="left:371.6px;top:458.35px;font-size:17.2px;line-height:23px;color:#1a1a1a;letter-spacing:-0.09px">Smith</span>
<div class="blk" style="left:30px;top:480.3px;width:116.3px;height:28.3px;border:2px solid #217346;box-sizing:border-box"></div>
<div class="blk" style="left:141px;top:503px;width:7.4px;height:7.4px;background:#217346;border:1px solid #fff;box-sizing:border-box"></div>
<svg aria-label="Select All" style="left:10px;top:306px" width="18" height="18" viewBox="10 306 18 18"><path d="M27 307.4 V323 H11.4 Z" fill="#b9b9b9"/></svg>
<svg aria-label="Table resize handle" style="left:473px;top:473px" width="8" height="8" viewBox="473 473 8 8"><path d="M477 474.4 H480.7 V480.7 H474 V478 H477 Z" fill="#3d5ba8"/></svg>
</section>
</div>
<div class="edge" style="left:0px;top:1px;width:1102px;height:2px;background:#9f9b9c;border-radius:3px 0 0 0"></div>
<div class="edge" style="left:0px;top:1px;width:3px;height:512px;background:linear-gradient(90deg,#cfcdcd 0,#cfcdcd 1px,#9f9b9c 1px);border-radius:3px 0 0 0"></div>
<div class="edge" style="left:1100px;top:1px;width:2px;height:512px;background:linear-gradient(90deg,rgba(165,162,163,.45) 0,rgba(165,162,163,.45) 1px,#a5a2a3 1px)"></div>
<div class="edge" style="left:0px;top:512px;width:1102px;height:1px;background:#9a9797"></div>
</body>
</html>
